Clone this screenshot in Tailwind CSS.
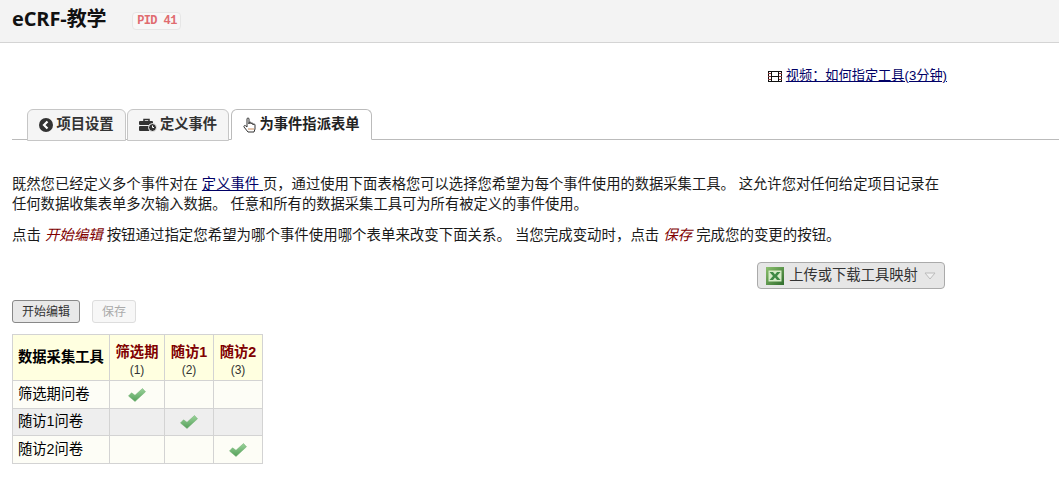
<!DOCTYPE html>
<html lang="zh">
<head>
    <meta charset="UTF-8">
    <meta name="viewport" content="width=device-width, initial-scale=1.0">
    <title>eCRF-教学</title>
    <script src="https://cdn.jsdelivr.net/npm/@tailwindcss/browser@4"></script>
</head>
<body class="bg-white text-[14.3px] text-black font-['Liberation_Sans','Noto_Sans_CJK_SC',sans-serif] overflow-hidden">
    <svg width="0" height="0" class="absolute">
        <defs>
            <linearGradient id="chk" x1="0" y1="0" x2="0" y2="1">
                <stop offset="0" stop-color="#9ad39a"/>
                <stop offset="1" stop-color="#55a05a"/>
            </linearGradient>
            <symbol id="check" viewBox="0 0 18 14">
                <path d="M.5 8 3.500 4.800 7 7.300 14.500.5 17.500 3.800 7 13.500z" fill="url(#chk)" stroke="#6fae6f" stroke-width=".5"/>
            </symbol>
        </defs>
    </svg>

    <!-- project title bar -->
    <div class="h-[43px] bg-[#f3f3f3] border-b border-[#d4d4d4] flex items-center pl-3">
        <h1 class="mb-[4px] text-[20px] font-bold leading-none text-[#111] font-['Open_Sans','Noto_Sans_CJK_SC',sans-serif] tracking-[-0.1px]">eCRF-教学</h1>
        <span class="ml-[26px] h-[18px] w-[49px] flex items-center justify-center rounded border border-[#e6e6e6] bg-[#f7f7f7] text-[12px] tracking-[-0.6px] font-bold text-[#e06c70] font-['Liberation_Mono',monospace]">PID 41</span>
    </div>

    <!-- video link -->
    <div class="h-[66px] flex justify-end pr-[112px] pt-[23px]">
        <div class="flex items-center h-[20px] gap-1">
            <svg width="14" height="11" viewBox="0 0 14 11" class="shrink-0">
                <rect x="0.500" y="0.500" width="13" height="10" fill="#fff" stroke="#111"/>
                <path d="M3.500 0v11M10.500 0v11M3.500 5.500h7" stroke="#111" fill="none"/>
                <path d="M0 2.500h3M0 5.500h3M0 8.500h3M11 2.500h3M11 5.500h3M11 8.500h3" stroke="#8a3a3a" fill="none"/>
            </svg>
            <a href="#" class="text-[#000066] underline text-[13.200px]">视频：如何指定工具(3分钟)</a>
        </div>
    </div>

    <!-- tabs -->
    <div class="h-[31px] ml-3 border-b border-[#bbb] flex items-end pl-[15px]">
        <a class="h-[32px] -mb-[2px] w-[99px] flex items-center justify-center gap-[3px] bg-[#f5f5f5] border border-[#c6c6c6] rounded-t-md font-bold text-[#333]">
            <svg width="14" height="14" viewBox="0 0 14 14"><circle cx="7" cy="7" r="7" fill="#333"/><path d="M8.500 3.500 5 7l3.500 3.500" stroke="#fff" stroke-width="2.200" fill="none"/></svg>
            项目设置
        </a>
        <a class="h-[32px] -mb-[2px] ml-px w-[102px] flex items-center justify-center gap-[3px] bg-[#f5f5f5] border border-[#c6c6c6] rounded-t-md font-bold text-[#333]">
            <svg width="18" height="14" viewBox="0 0 18 14"><path d="M5 3V1.500h5V3" stroke="#333" stroke-width="1.500" fill="none"/><rect x="0" y="3" width="14" height="4" rx="1" fill="#333"/><rect x="0" y="8" width="11" height="5" rx="1" fill="#333"/><circle cx="13.500" cy="9.500" r="4" fill="#333" stroke="#f5f5f5"/><path d="M13.500 7.500v2h1.500" stroke="#fff" fill="none"/></svg>
            定义事件
        </a>
        <a class="h-[31px] -mb-px ml-[2px] w-[141px] flex items-center justify-center gap-[3px] bg-white border border-b-white border-[#bbb] rounded-t-md font-bold text-[#222]">
            <svg width="13" height="16" viewBox="0 0 13 16"><path d="M4 8V2a1 1 0 0 1 2 0v5V6a1 1 0 0 1 2 0v1a1 1 0 0 1 2 0v1a1 1 0 0 1 2 0v4l-1 3H5L1 10c-.5-1 .7-2 1.500-1.300L4 10z" fill="#fff" stroke="#333"/><path d="M6 11v2M8 11v2M10 11v2" stroke="#c98a5a"/></svg>
            为事件指派表单
        </a>
    </div>

    <!-- instructions -->
    <div class="pl-3 pt-[34px] w-[945px] text-[#1a1a1a] leading-[20px]">
        <p>既然您已经定义多个事件对在 <a href="#" class="text-[#000066] underline">定义事件 </a>页，通过使用下面表格您可以选择您希望为每个事件使用的数据采集工具。 这允许您对任何给定项目记录在任何数据收集表单多次输入数据。 任意和所有的数据采集工具可为所有被定义的事件使用。</p>
        <p class="mt-[11px] text-[14.450px] whitespace-nowrap">点击 <i class="text-[#800000]">开始编辑</i> 按钮通过指定您希望为哪个事件使用哪个表单来改变下面关系。 当您完成变动时，点击 <i class="text-[#800000]">保存</i> 完成您的变更的按钮。</p>
    </div>

    <!-- upload / download button -->
    <div class="flex justify-end pr-[114px] mt-[17px]">
        <button class="h-[27px] w-[188px] flex items-center justify-center gap-[5px] bg-[#e6e6e6] border border-[#aaa] rounded text-[#333]">
            <svg width="18" height="18" viewBox="0 0 18 18">
                <defs><linearGradient id="xl" x1="0" y1="0" x2="1" y2="1"><stop offset="0" stop-color="#8cc06e"/><stop offset="1" stop-color="#2f6d2c"/></linearGradient></defs>
                <rect width="18" height="18" fill="url(#xl)"/>
                <rect x="2.500" y="3.500" width="13" height="11" fill="#d6ecc8"/>
                <path d="M3.500 5h3.500L9 7.500 11 5h3.500L11 9l3.500 4H11L9 10.500 7 13H3.500L7 9z" fill="#3d8a45"/>
            </svg>
            上传或下载工具映射
            <svg width="12" height="8" viewBox="0 0 12 8" class="ml-px"><path d="M1 1h10L6 7z" fill="#f0f0f0" stroke="#bbb"/></svg>
        </button>
    </div>

    <!-- edit buttons -->
    <div class="flex pl-3 gap-3 mt-[11px]">
        <button class="h-[23px] w-[68px] bg-[#e8e8e8] border border-[#888] rounded-[3px] text-[12px] text-[#333]">开始编辑</button>
        <button class="h-[23px] w-[44px] bg-[#f7f7f7] border border-[#ddd] rounded-[3px] text-[12px] text-[#aaa]">保存</button>
    </div>

    <!-- event / instrument grid -->
    <table class="ml-3 mt-[11px] w-[250px] border-collapse table-fixed">
        <thead>
            <tr class="bg-[#ffffe0] h-[46px]">
                <th class="w-[97px] border border-[#d3d3d3] text-left pl-[5px] font-bold">数据采集工具</th>
                <th class="w-[55px] pt-[6px] border border-[#d3d3d3] font-bold text-[#800000] leading-[18px]">筛选期<div class="font-normal text-[12px] text-[#333]">(1)</div></th>
                <th class="w-[49px] pt-[6px] border border-[#d3d3d3] font-bold text-[#800000] leading-[18px]">随访1<div class="font-normal text-[12px] text-[#333]">(2)</div></th>
                <th class="w-[49px] pt-[6px] border border-[#d3d3d3] font-bold text-[#800000] leading-[18px]">随访2<div class="font-normal text-[12px] text-[#333]">(3)</div></th>
            </tr>
        </thead>
        <tbody>
            <tr class="bg-[#fdfdf6] h-[28px]">
                <td class="border border-[#d3d3d3] pl-[5px]">筛选期问卷</td>
                <td class="border border-[#d3d3d3]"><svg width="18" height="14" class="mx-auto"><use href="#check"/></svg></td>
                <td class="border border-[#d3d3d3]"></td>
                <td class="border border-[#d3d3d3]"></td>
            </tr>
            <tr class="bg-[#eeeeee] h-[27px]">
                <td class="border border-[#d3d3d3] pl-[5px]">随访1问卷</td>
                <td class="border border-[#d3d3d3]"></td>
                <td class="border border-[#d3d3d3]"><svg width="18" height="14" class="mx-auto"><use href="#check"/></svg></td>
                <td class="border border-[#d3d3d3]"></td>
            </tr>
            <tr class="bg-[#fdfdf6] h-[28px]">
                <td class="border border-[#d3d3d3] pl-[5px]">随访2问卷</td>
                <td class="border border-[#d3d3d3]"></td>
                <td class="border border-[#d3d3d3]"></td>
                <td class="border border-[#d3d3d3]"><svg width="18" height="14" class="mx-auto"><use href="#check"/></svg></td>
            </tr>
        </tbody>
    </table>
</body>
</html>
